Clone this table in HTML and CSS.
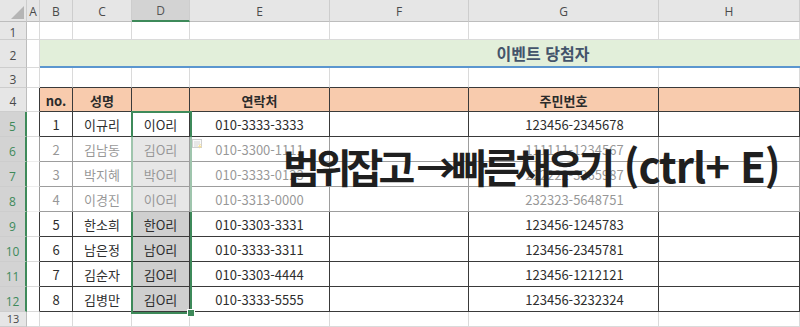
FILE: index.html
```html
<!DOCTYPE html>
<html lang="ko">
<head>
<meta charset="utf-8">
<link rel="stylesheet" href="styles.css">
</head>
<body>
<div class="sheet">
  <!-- column headers -->
  <div class="ch corner"><span class="tri"></span></div>
  <div class="ch">A</div><div class="ch">B</div><div class="ch">C</div><div class="ch chsel">D</div><div class="ch">E</div><div class="ch">F</div><div class="ch">G</div><div class="ch">H</div>
  <!-- row 1 -->
  <div class="rh">1</div><div class="c"></div><div class="c"></div><div class="c"></div><div class="c"></div><div class="c"></div><div class="c"></div><div class="c"></div><div class="c"></div>
  <!-- row 2 -->
  <div class="rh">2</div><div class="c"></div><div class="title"><span class="title-text">이벤트 당첨자</span></div>
  <!-- row 3 -->
  <div class="rh">3</div><div class="c"></div><div class="c tt"></div><div class="c tt"></div><div class="c tt"></div><div class="c tt"></div><div class="c tt"></div><div class="c tt"></div><div class="c tt"></div>
  <!-- row 4 -->
  <div class="rh">4</div><div class="c tl"></div><div class="t hd">no.</div><div class="t hd">성명</div><div class="t hd"></div><div class="t hd">연락처</div><div class="t hd"></div><div class="t hd">주민번호</div><div class="t hd"></div>
  <!-- row 5 -->
  <div class="rh rsel">5</div><div class="c tl"></div><div class="t">1</div><div class="t">이규리</div><div class="t dact">이O리</div><div class="t">010-3333-3333</div><div class="t"></div><div class="t jm">123456-2345678</div><div class="t"></div>
  <!-- row 6 -->
  <div class="rh rsel">6</div><div class="c tl"></div><div class="t">2</div><div class="t">김남동</div><div class="t dsel">김O리</div><div class="t ff"><span class="ffi"><svg width="11" height="10" viewBox="0 0 11 10"><rect x="0.5" y="0.5" width="9" height="8" fill="#f4f4f4" stroke="#a0a0a0"/><path d="M2 3h6M2 5h6M2 7h4" stroke="#a8a8a8"/><path d="M8 5l-2 3h2l-1 2 3-3H8l1-2z" fill="#f2c230"/></svg></span>010-3300-1111</div><div class="t"></div><div class="t jm">111111-1234567</div><div class="t"></div>
  <!-- row 7 -->
  <div class="rh rsel">7</div><div class="c tl"></div><div class="t">3</div><div class="t">박지혜</div><div class="t dsel">박O리</div><div class="t">010-3333-0123</div><div class="t"></div><div class="t jm">222222-3265987</div><div class="t"></div>
  <!-- row 8 -->
  <div class="rh rsel">8</div><div class="c tl"></div><div class="t">4</div><div class="t">이경진</div><div class="t dsel">이O리</div><div class="t">010-3313-0000</div><div class="t"></div><div class="t jm">232323-5648751</div><div class="t"></div>
  <!-- row 9 -->
  <div class="rh rsel">9</div><div class="c tl"></div><div class="t">5</div><div class="t">한소희</div><div class="t dsel">한O리</div><div class="t">010-3303-3331</div><div class="t"></div><div class="t jm">123456-1245783</div><div class="t"></div>
  <!-- row 10 -->
  <div class="rh rsel">10</div><div class="c tl"></div><div class="t">6</div><div class="t">남은정</div><div class="t dsel">남O리</div><div class="t">010-3333-3311</div><div class="t"></div><div class="t jm">123456-2345781</div><div class="t"></div>
  <!-- row 11 -->
  <div class="rh rsel">11</div><div class="c tl"></div><div class="t">7</div><div class="t">김순자</div><div class="t dsel">김O리</div><div class="t">010-3303-4444</div><div class="t"></div><div class="t jm">123456-1212121</div><div class="t"></div>
  <!-- row 12 -->
  <div class="rh rsel">12</div><div class="c tl"></div><div class="t">8</div><div class="t">김병만</div><div class="t dsel">김O리</div><div class="t">010-3333-5555</div><div class="t"></div><div class="t jm">123456-3232324</div><div class="t"></div>
  <!-- row 13 -->
  <div class="rh last">13</div><div class="c"></div><div class="c"></div><div class="c"></div><div class="c"></div><div class="c"></div><div class="c"></div><div class="c"></div><div class="c"></div>
</div>
<div class="selbox"><span class="handle"></span></div>
<div class="band"></div>
<div class="caption">범위잡고 →빠른채우기 <span class="lat">(ctrl+ E)</span></div>
</body>
</html>
```

FILE: styles.css
```css
html, body {
  margin: 0;
  padding: 0;
  background: #ffffff;
  overflow: hidden;
}
body {
  position: relative;
  width: 800px;
  height: 327px;
  font-family: "Noto Sans CJK KR", "Noto Sans", sans-serif;
}
.sheet {
  display: grid;
  grid-template-columns: 27px 13px 33px 59px 58px 140px 139px 190px 141px;
  grid-template-rows: 22px 18px 28px 20px 24px repeat(8, 25px) 15px;
}
.sheet > div {
  box-sizing: border-box;
  display: flex;
  align-items: center;
  justify-content: center;
  overflow: hidden;
  white-space: nowrap;
}
.ch {
  background: #e6e6e6;
  border-right: 1px solid #cdcdcd;
  border-bottom: 1px solid #bdbdbd;
  font-family: "Open Sans", "Noto Sans", sans-serif;
  font-size: 12px;
  color: #4a4a4a;
  padding-top: 1px;
}
.chsel {
  background: #d3d3d3;
  border-bottom: 2px solid #3e8a5a;
  color: #555;
}
.corner {
  position: relative;
}
.tri {
  position: absolute;
  right: 2px;
  bottom: 2px;
  width: 0;
  height: 0;
  border-left: 13px solid transparent;
  border-bottom: 13px solid #b5b5b5;
}
.rh {
  background: #e6e6e6;
  border-right: 1px solid #bdbdbd;
  border-bottom: 1px solid #cdcdcd;
  font-family: "Open Sans", "Noto Sans", sans-serif;
  font-size: 12px;
  color: #4a4a4a;
  padding-top: 4px;
}
.rh.last {
  padding-top: 0;
  line-height: 14px;
  font-size: 11px;
}
.rsel {
  background: #d3d3d3;
  color: #3e8a5a;
  border-right: 2px solid #3e8a5a;
}
.c {
  border-right: 1px solid #dadada;
  border-bottom: 1px solid #dadada;
}
.c.tt {
  border-bottom: 1px solid #3a3a3a;
}
.c.tl {
  border-right: 1px solid #3a3a3a;
}
.title {
  grid-column: span 7;
  background: #e2efda;
  border-bottom: 2px solid #5b96cf;
  padding-left: 246px;
}
.title-text {
  font-size: 16px;
  font-weight: 700;
  color: #44546a;
}
.t {
  border-right: 1px solid #3a3a3a;
  border-bottom: 1px solid #3a3a3a;
  font-size: 13px;
  color: #2e2e2e;
  padding-top: 1px;
}
.hd {
  background: #f8cbad;
  font-weight: 700;
  color: #2b2b2b;
}
.dsel {
  background: #cfcfcf;
}
.dact {
  background: #ffffff;
}
.jm {
  padding-left: 22px;
}
.ff {
  position: relative;
}
.ffi {
  position: absolute;
  left: 2px;
  top: 2px;
  display: flex;
}
.selbox {
  position: absolute;
  left: 131px;
  top: 111px;
  width: 57px;
  height: 199px;
  border: 2px solid #3e8a5a;
}
.handle {
  position: absolute;
  right: -5px;
  bottom: -5px;
  width: 6px;
  height: 6px;
  background: #3e8a5a;
  border: 1px solid #fff;
}
.band {
  position: absolute;
  left: 28px;
  top: 137px;
  width: 772px;
  height: 75px;
  background: rgba(255, 255, 255, 0.5);
}
.caption {
  position: absolute;
  left: 283px;
  top: 141px;
  font-size: 40px;
  line-height: 48px;
  font-weight: 700;
  letter-spacing: -5px;
  color: #1f1f1f;
  white-space: nowrap;
}
.lat {
  font-size: 42px;
  letter-spacing: -1px;
  margin-left: 7px;
}
```
